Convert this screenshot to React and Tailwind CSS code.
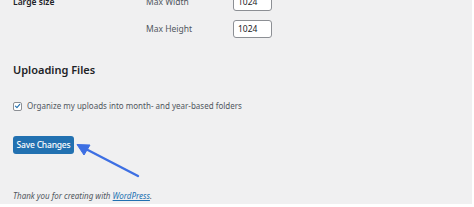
export default function App() {
  const font = { fontFamily: '"Noto Sans", "Liberation Sans", Arial, sans-serif' };
  return (
    <div className="h-[207px] w-[474px] overflow-hidden bg-white" style={font}>
      <div className="relative h-[204px] w-[472px] overflow-hidden bg-[#f0f0f1] text-[#1d2327]">
        <div className="-mt-[7px] pl-[13px]">
          {/* image size rows */}
          <div className="grid grid-cols-[133px_87px_40px] items-center gap-y-[9px]">
            <div className="self-start pt-[3px] text-[8.5px] font-semibold">Large size</div>
            <div className="text-[8.5px] text-[#50575e]">Max Width</div>
            <div className="flex h-[18px] w-[39px] items-center rounded-[3px] border border-[#8c8f94] bg-white pl-[4px] text-[8.5px]">1024</div>
            <div />
            <div className="text-[8.5px] text-[#50575e]">Max Height</div>
            <div className="flex h-[18px] w-[39px] items-center rounded-[3px] border border-[#8c8f94] bg-white pl-[4px] text-[8.5px]">1024</div>
          </div>

          <h2 className="mt-[25px] text-[11px] font-semibold leading-[14px]">Uploading Files</h2>

          <label className="mt-[23px] flex items-center gap-[5px] text-[8px] text-[#50575e]">
            <span className="flex h-[9px] w-[9px] items-center justify-center rounded-[2px] border border-[#8c8f94] bg-white">
              <svg viewBox="0 0 10 10" className="h-[8px] w-[8px]">
                <path d="M2 5.2 L4.2 7.3 L8.2 2.6" fill="none" stroke="#2271b1" strokeWidth="1.6" strokeLinecap="round" strokeLinejoin="round" />
              </svg>
            </span>
            Organize my uploads into month- and year-based folders
          </label>

          <button className="mt-[24px] flex h-[18px] w-[61px] items-center justify-center rounded-[3px] bg-[#2271b1] text-[8.5px] font-medium tracking-[-0.2px] text-white">
            Save Changes
          </button>

          <p className="mt-[36px] text-[8px] italic text-[#50575e]">
            Thank you for creating with{' '}
            <span className="text-[#2271b1] underline">WordPress</span>.
          </p>
        </div>

        {/* annotation arrow */}
        <svg className="absolute left-[74px] top-[140px] h-[40px] w-[70px]" viewBox="0 0 70 40">
          <path d="M64 36 L8 7" stroke="#3d6fe3" strokeWidth="2.4" strokeLinecap="round" fill="none" />
          <path d="M3 4.5 L16 5 L10 15 Z" fill="#3d6fe3" stroke="#3d6fe3" strokeWidth="1" strokeLinejoin="round" />
        </svg>
      </div>
    </div>
  );
}
